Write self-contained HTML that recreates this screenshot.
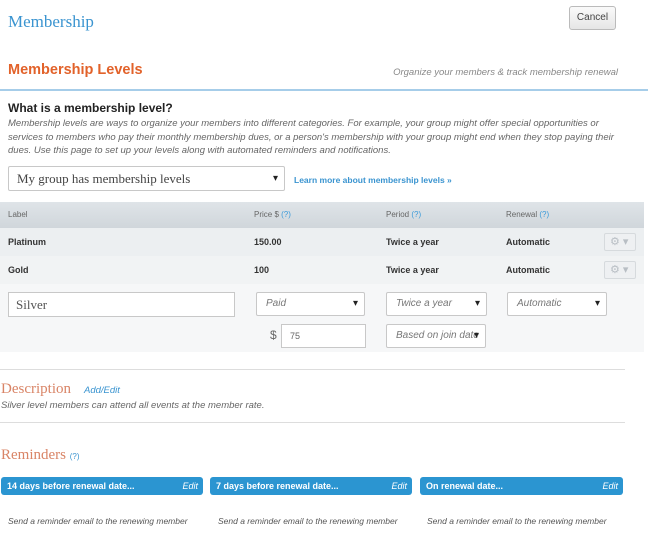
<!DOCTYPE html>
<html><head><style>
*{margin:0;padding:0;box-sizing:border-box}
body{width:650px;height:539px;background:#fff;font-family:"Liberation Sans",sans-serif;position:relative;overflow:hidden;color:#333}
.a{position:absolute;white-space:nowrap}
.serif{font-family:"Liberation Serif",serif}
.sel{position:absolute;border:1px solid #c8c8c8;background:#fff;border-radius:2px;font-size:10px;font-style:italic;color:#777;padding-left:9px;line-height:22px}
.sel:after{content:"▾";position:absolute;right:6px;top:0;font-style:normal;color:#222;font-size:10px}
.q{color:#3a9ad9}
.bar{position:absolute;top:477px;height:18px;background:#2b95d1;border-radius:3px;color:#fff;font-size:9px;font-weight:bold;line-height:18px;padding-left:6px}
.bar i{position:absolute;right:5px;font-weight:normal}
.gear{position:absolute;left:604px;width:32px;height:18px;border:1px solid #d6dadd;border-radius:2px;background:#eef0f2;color:#b8bec4;font-size:11px;line-height:16px;padding-left:5px}
</style></head><body>
<div class="a serif" style="left:8px;top:12px;font-size:17px;color:#3a94d0">Membership</div>
<div class="a" style="left:569px;top:6px;width:47px;height:24px;border:1px solid #bbb;border-radius:3px;background:linear-gradient(#fafafa,#e6e6e6);font-size:10px;line-height:22px;text-align:center;color:#444">Cancel</div>
<div class="a" style="left:8px;top:62px;font-size:14.5px;font-weight:bold;color:#e2622a">Membership Levels</div>
<div class="a" style="right:32px;top:67px;font-size:9.5px;font-style:italic;color:#888">Organize your members &amp; track membership renewal</div>
<div class="a" style="left:0;top:89px;width:648px;height:2px;background:#a6cde9"></div>
<div class="a" style="left:8px;top:101px;font-size:12px;font-weight:bold;color:#222">What is a membership level?</div>
<div class="a" style="left:8px;top:117px;font-size:9.5px;font-style:italic;color:#666;line-height:13.5px">Membership levels are ways to organize your members into different categories. For example, your group might offer special opportunities or<br>services to members who pay their monthly membership dues, or a person's membership with your group might end when they stop paying their<br>dues. Use this page to set up your levels along with automated reminders and notifications.</div>
<div class="sel serif" style="left:8px;top:166px;width:277px;height:25px;font-size:13px;font-style:normal;color:#444;line-height:23px;padding-left:8px">My group has membership levels</div>
<div class="a" style="left:294px;top:175px;font-size:8.5px;font-weight:bold;color:#3a94d0">Learn more about membership levels »</div>
<div class="a" style="left:0;top:202px;width:644px;height:26px;background:linear-gradient(#dfe4e8,#d0d6db)"></div>
<div class="a" style="left:0;top:228px;width:644px;height:28px;background:#eceff1"></div>
<div class="a" style="left:0;top:256px;width:644px;height:28px;background:#f1f3f4"></div>
<div class="a" style="left:0;top:284px;width:644px;height:68px;background:#f6f7f8"></div>
<div class="a" style="left:8px;top:210px;font-size:8px;color:#666">Label</div>
<div class="a" style="left:254px;top:210px;font-size:8px;color:#666">Price $ <span class="q">(?)</span></div>
<div class="a" style="left:386px;top:210px;font-size:8px;color:#666">Period <span class="q">(?)</span></div>
<div class="a" style="left:506px;top:210px;font-size:8px;color:#666">Renewal <span class="q">(?)</span></div>
<div class="a" style="left:8px;top:237px;font-size:9px;font-weight:bold;color:#333">Platinum</div>
<div class="a" style="left:254px;top:237px;font-size:9px;font-weight:bold">150.00</div>
<div class="a" style="left:386px;top:237px;font-size:9px;font-weight:bold">Twice a year</div>
<div class="a" style="left:506px;top:237px;font-size:9px;font-weight:bold">Automatic</div>
<div class="gear" style="top:233px">⚙ ▾</div>
<div class="a" style="left:8px;top:265px;font-size:9px;font-weight:bold">Gold</div>
<div class="a" style="left:254px;top:265px;font-size:9px;font-weight:bold">100</div>
<div class="a" style="left:386px;top:265px;font-size:9px;font-weight:bold">Twice a year</div>
<div class="a" style="left:506px;top:265px;font-size:9px;font-weight:bold">Automatic</div>
<div class="gear" style="top:261px">⚙ ▾</div>
<div class="a serif" style="left:8px;top:292px;width:227px;height:25px;border:1px solid #c8c8c8;background:#fff;font-size:13px;color:#555;padding-left:7px;line-height:23px">Silver</div>
<div class="sel" style="left:256px;top:292px;width:109px;height:24px">Paid</div>
<div class="sel" style="left:386px;top:292px;width:101px;height:24px">Twice a year</div>
<div class="sel" style="left:507px;top:292px;width:100px;height:24px">Automatic</div>
<div class="a" style="left:270px;top:328px;font-size:12px;color:#666">$</div>
<div class="a" style="left:281px;top:324px;width:85px;height:24px;border:1px solid #c8c8c8;background:#fff;font-size:9px;color:#666;padding-left:8px;line-height:22px">75</div>
<div class="sel" style="left:386px;top:324px;width:100px;height:24px;overflow:hidden">Based on join date</div>
<div class="a" style="left:0;top:369px;width:625px;height:1px;background:#ddd"></div>
<div class="a serif" style="left:1px;top:381px;font-size:15px;color:#d98466">Description</div>
<div class="a" style="left:84px;top:385px;font-size:9.5px;font-style:italic;color:#3a94d0">Add/Edit</div>
<div class="a" style="left:1px;top:400px;font-size:9.5px;font-style:italic;color:#666">Silver level members can attend all events at the member rate.</div>
<div class="a" style="left:0;top:422px;width:625px;height:1px;background:#ddd"></div>
<div class="a serif" style="left:1px;top:447px;font-size:15px;color:#d98466">Reminders <span style="font-family:'Liberation Sans';font-size:8px;color:#3a94d0">(?)</span></div>
<div class="bar" style="left:1px;width:202px">14 days before renewal date...<i>Edit</i></div>
<div class="bar" style="left:210px;width:202px">7 days before renewal date...<i>Edit</i></div>
<div class="bar" style="left:420px;width:203px">On renewal date...<i>Edit</i></div>
<div class="a" style="left:8px;top:516px;font-size:8.5px;font-style:italic;color:#555">Send a reminder email to the renewing member</div>
<div class="a" style="left:218px;top:516px;font-size:8.5px;font-style:italic;color:#555">Send a reminder email to the renewing member</div>
<div class="a" style="left:427px;top:516px;font-size:8.5px;font-style:italic;color:#555">Send a reminder email to the renewing member</div>
</body></html>
